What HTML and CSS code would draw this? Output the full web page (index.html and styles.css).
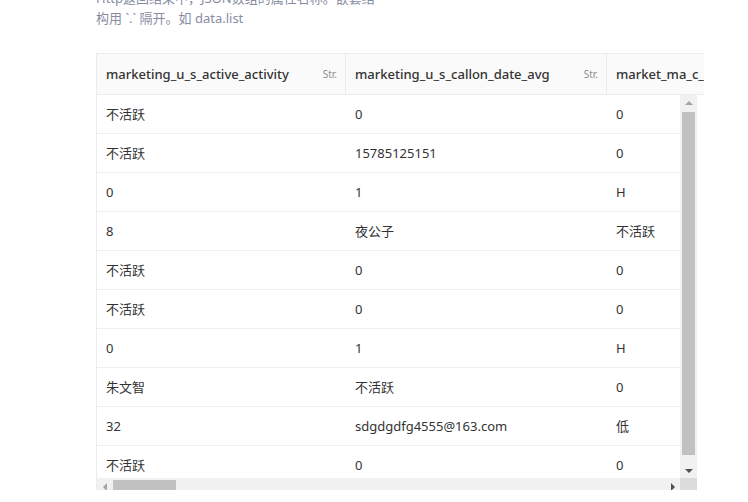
FILE: index.html
```html
<!DOCTYPE html>
<html lang="zh">
<head>
<meta charset="utf-8">
<link rel="stylesheet" href="styles.css">
</head>
<body>
<div class="page">
  <div class="desc">Http返回结果中，JSON数组的属性名称。嵌套结<br>构用 `.` 隔开。如 data.list</div>
  <div class="table">
    <div class="thead">
      <div class="th c1"><span class="tname">marketing_u_s_active_activity</span><span class="ttype">Str.</span></div>
      <div class="th c2"><span class="tname">marketing_u_s_callon_date_avg</span><span class="ttype">Str.</span></div>
      <div class="th c3"><span class="tname">market_ma_c_status_level</span><span class="ttype">Str.</span></div>
    </div>
    <div class="tbody-wrap">
      <div class="tbody">
        <div class="tr"><div class="td c1">不活跃</div><div class="td c2">0</div><div class="td c3">0</div></div>
        <div class="tr"><div class="td c1">不活跃</div><div class="td c2">15785125151</div><div class="td c3">0</div></div>
        <div class="tr"><div class="td c1">0</div><div class="td c2">1</div><div class="td c3">H</div></div>
        <div class="tr"><div class="td c1">8</div><div class="td c2">夜公子</div><div class="td c3">不活跃</div></div>
        <div class="tr"><div class="td c1">不活跃</div><div class="td c2">0</div><div class="td c3">0</div></div>
        <div class="tr"><div class="td c1">不活跃</div><div class="td c2">0</div><div class="td c3">0</div></div>
        <div class="tr"><div class="td c1">0</div><div class="td c2">1</div><div class="td c3">H</div></div>
        <div class="tr"><div class="td c1">朱文智</div><div class="td c2">不活跃</div><div class="td c3">0</div></div>
        <div class="tr"><div class="td c1">32</div><div class="td c2">sdgdgdfg4555@163.com</div><div class="td c3">低</div></div>
        <div class="tr"><div class="td c1">不活跃</div><div class="td c2">0</div><div class="td c3">0</div></div>
      </div>
      <div class="vscroll">
        <div class="arrow up"></div>
        <div class="vtrack"><div class="vthumb"></div></div>
        <div class="arrow down"></div>
      </div>
      <div class="hscroll">
        <div class="arrow left"></div>
        <div class="htrack"><div class="hthumb"></div></div>
        <div class="arrow right"></div>
      </div>
      <div class="corner"></div>
    </div>
  </div>
</div>
</body>
</html>
```
FILE: styles.css
```css
* { box-sizing: border-box; }
html, body { margin: 0; padding: 0; background: #fff; }
body {
  font-family: "Noto Sans", "Noto Sans CJK SC", sans-serif;
  color: #333;
  overflow: hidden;
}
.page {
  padding-left: 96px;
  width: 748px;
  height: 502px;
}
.desc {
  margin-top: -12px;
  font-size: 13px;
  line-height: 20px;
  color: #878ca3;
  height: 40px;
  margin-bottom: 25px;
}
.table {
  width: 608px;
  border-left: 1px solid #ececec;
}
.thead {
  display: flex;
  height: 42px;
  background: #fafafa;
  border-top: 1px solid #ececec;
  border-bottom: 1px solid #ececec;
  overflow: hidden;
}
.th {
  flex: none;
  display: flex;
  align-items: center;
  justify-content: space-between;
  padding: 0 8px 0 9px;
  border-right: 1px solid #ececec;
  white-space: nowrap;
  font-size: 13px;
  font-weight: 500;
  color: #333;
}
.c1 { width: 249px; }
.c2 { width: 261px; }
.c3 { width: 300px; }
.ttype {
  font-size: 10px;
  font-weight: 400;
  color: #8c8c8c;
  margin-left: 12px;
}
.tbody-wrap {
  display: grid;
  grid-template-columns: 583px 17px;
  grid-template-rows: 383px 17px;
}
.tbody {
  overflow: hidden;
}
.tr {
  display: flex;
  height: 39px;
  border-bottom: 1px solid #f0f0f0;
  width: max-content;
}
.td {
  flex: none;
  display: flex;
  align-items: center;
  padding: 0 0 1px 9px;
  font-size: 13px;
  color: #333;
  white-space: nowrap;
}
.vscroll {
  display: flex;
  flex-direction: column;
  background: #f1f1f1;
}
.vtrack {
  flex: 1;
  display: flex;
  flex-direction: column;
  padding: 0 2px;
}
.vthumb {
  margin-top: 2px;
  height: 343px;
  background: #c1c1c1;
}
.hscroll {
  display: flex;
  background: #f1f1f1;
}
.htrack {
  flex: 1;
  padding: 2px 0;
}
.hthumb {
  margin-left: 1px;
  width: 63px;
  height: 100%;
  background: #c1c1c1;
}
.corner { background: #dcdcdc; }
.arrow {
  flex: none;
  width: 17px;
  height: 15px;
  position: relative;
}
.hscroll .arrow { width: 15px; height: 17px; }
.arrow::after {
  content: "";
  position: absolute;
  left: 50%;
  top: 50%;
  width: 0;
  height: 0;
  border: 4px solid transparent;
}
.arrow.up::after { border-bottom-color: #a3a3a3; border-top-width: 0; transform: translate(-50%, -50%); }
.arrow.down::after { border-top-color: #505050; border-bottom-width: 0; transform: translate(-50%, -50%); }
.arrow.left::after { border-right-color: #a3a3a3; border-left-width: 0; transform: translate(-50%, -50%); }
.arrow.right::after { border-left-color: #505050; border-right-width: 0; transform: translate(-50%, -50%); }
```
